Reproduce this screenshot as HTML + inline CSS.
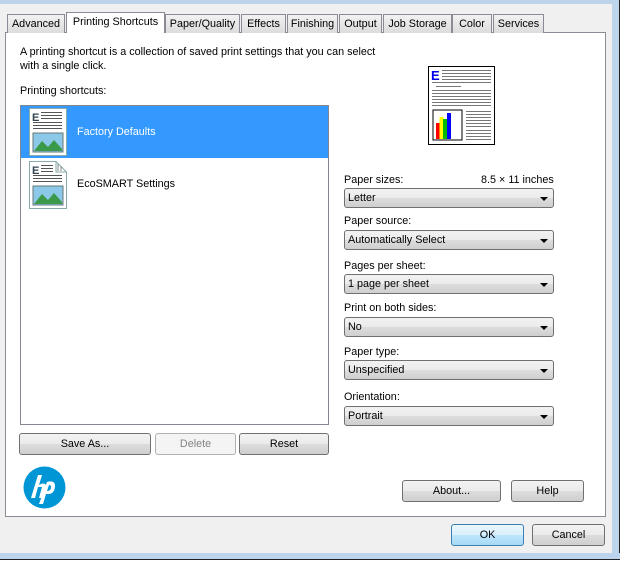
<!DOCTYPE html>
<html><head><meta charset="utf-8"><style>
*{box-sizing:border-box;margin:0;padding:0}
body{width:624px;height:563px;position:relative;overflow:hidden;background:#f0f0f0;font-family:"Liberation Sans",sans-serif;font-size:10.8px;color:#000}
.a{position:absolute}
.tab{position:absolute;top:14px;height:19px;border:1px solid #898c95;border-bottom:none;background:linear-gradient(#f2f2f2,#dcdcdc);text-align:center;line-height:19px;white-space:nowrap}
.btn{position:absolute;border:1px solid #707070;border-radius:3px;background:linear-gradient(#f2f2f2 0,#ebebeb 50%,#dddddd 51%,#cfcfcf 100%);text-align:center;line-height:21px}
.sel{position:absolute;left:344px;width:210px;height:20px;border:1px solid #707070;border-radius:3px;background:linear-gradient(#f2f2f2 0,#ebebeb 50%,#dddddd 51%,#cfcfcf 100%);padding-left:3px;line-height:19px}
.sel:after{content:"";position:absolute;right:5px;top:8px;border-left:4px solid transparent;border-right:4px solid transparent;border-top:4px solid #000}
.lbl{position:absolute;left:344px}
</style></head><body>
<div class="a" style="left:0;top:0;width:612px;height:4px;background:#bcd3ea"></div>
<div class="a" style="left:612px;top:0;width:8px;height:558px;background:#bcd4ec"></div>
<div class="a" style="left:619px;top:0;width:1px;height:563px;background:#222"></div>
<div class="a" style="left:620px;top:0;width:4px;height:563px;background:#fff"></div>
<div class="a" style="left:0;top:553px;width:620px;height:6px;background:#bcd4ec"></div>
<div class="a" style="left:0;top:559px;width:620px;height:1px;background:#222"></div>
<div class="a" style="left:0;top:560px;width:620px;height:3px;background:#fff"></div>

<div class="a" style="left:5px;top:32px;width:601px;height:485px;background:#fff;border:1px solid #898c95"></div>
<div class="tab" style="left:7px;width:58px">Advanced</div>
<div class="tab" style="left:66px;top:12px;height:21px;width:99px;background:#fff;z-index:2;line-height:19px">Printing Shortcuts</div>
<div class="tab" style="left:165px;width:75px">Paper/Quality</div>
<div class="tab" style="left:241px;width:45px">Effects</div>
<div class="tab" style="left:287px;width:51px">Finishing</div>
<div class="tab" style="left:339px;width:43px">Output</div>
<div class="tab" style="left:383px;width:69px">Job Storage</div>
<div class="tab" style="left:452px;width:40px">Color</div>
<div class="tab" style="left:493px;width:51px">Services</div>

<div class="a" style="left:20px;top:45px;line-height:14px">A printing shortcut is a collection of saved print settings that you can select<br>with a single click.</div>
<div class="a" style="left:20px;top:85px">Printing shortcuts:</div>

<div class="a" style="left:20px;top:105px;width:309px;height:320px;border:1px solid #828790;background:#fff"></div>
<div class="a" style="left:21px;top:106px;width:307px;height:52px;background:#3399ff"></div>
<svg class="a" style="left:28px;top:107px" width="40" height="50">
<rect x="1.5" y="1.5" width="37" height="47" fill="#fff" stroke="#8aa" />
<text x="4" y="14" font-family="Liberation Sans" font-weight="bold" font-size="11" fill="#345">E</text>
<g stroke="#555" stroke-width="1"><line x1="13" y1="5.5" x2="34" y2="5.5"/><line x1="13" y1="8.5" x2="34" y2="8.5"/><line x1="13" y1="11.5" x2="34" y2="11.5"/><line x1="5" y1="15.5" x2="34" y2="15.5"/><line x1="5" y1="18.5" x2="34" y2="18.5"/><line x1="5" y1="21.5" x2="34" y2="21.5"/></g>
<rect x="5" y="26" width="30" height="19" fill="#8cc8e8" stroke="#677"/>
<path d="M6 44 L14 34 L20 40 L26 33 L34 42 L34 44 Z" fill="#3a9a4a"/>
</svg>
<div class="a" style="left:77px;top:126px;color:#fff">Factory Defaults</div>
<svg class="a" style="left:28px;top:160px" width="40" height="50">
<path d="M1.5 1.5 H28 L38.5 12 V48.5 H1.5 Z" fill="#fff" stroke="#8aa"/>
<path d="M28 1.5 V12 H38.5" fill="none" stroke="#8aa"/>
<g stroke="#888"><line x1="30" y1="4" x2="30" y2="11"/><line x1="33" y1="6" x2="33" y2="11"/></g>
<text x="4" y="14" font-family="Liberation Sans" font-weight="bold" font-size="11" fill="#345">E</text>
<g stroke="#555" stroke-width="1"><line x1="13" y1="5.5" x2="25" y2="5.5"/><line x1="13" y1="8.5" x2="25" y2="8.5"/><line x1="13" y1="11.5" x2="25" y2="11.5"/><line x1="5" y1="15.5" x2="34" y2="15.5"/><line x1="5" y1="18.5" x2="34" y2="18.5"/><line x1="5" y1="21.5" x2="34" y2="21.5"/></g>
<rect x="5" y="26" width="30" height="19" fill="#8cc8e8" stroke="#677"/>
<path d="M6 44 L14 34 L20 40 L26 33 L34 42 L34 44 Z" fill="#3a9a4a"/>
</svg>
<div class="a" style="left:77px;top:178px">EcoSMART Settings</div>

<div class="btn" style="left:19px;top:433px;width:132px;height:22px">Save As...</div>
<div class="btn" style="left:155px;top:433px;width:81px;height:22px;background:#f4f4f4;border-color:#adb2b5;color:#838383">Delete</div>
<div class="btn" style="left:239px;top:433px;width:90px;height:22px">Reset</div>

<svg class="a" style="left:23px;top:466px" width="43" height="43" viewBox="0 0 43 43">
<circle cx="21.5" cy="21.5" r="21" fill="#0096d6"/>
<path d="M15 9 L19 9 L16 19 Q21 16 23 19 L20 32 L16 32 L19 21 L15 21 L12 32 L8 32 Z M24 16 Q31 14 32 19 Q32 28 25 28 L23 28 L20 38 L16 38 Z M26 19 L24 25 Q28 25 28 21 Q28 19 26 19 Z" fill="#fff"/>
</svg>

<div class="btn" style="left:402px;top:480px;width:99px;height:22px">About...</div>
<div class="btn" style="left:511px;top:480px;width:73px;height:22px">Help</div>

<div class="btn" style="left:451px;top:524px;width:73px;height:22px;border-color:#3c7fb1;background:linear-gradient(#eaf6fd 0,#d9f0fc 50%,#bee6fd 51%,#a7d9f5 100%)">OK</div>
<div class="btn" style="left:532px;top:524px;width:73px;height:22px">Cancel</div>

<svg class="a" style="left:428px;top:66px" width="67" height="79">
<rect x="0.5" y="0.5" width="66" height="78" fill="#fff" stroke="#000"/>
<text x="3" y="14" font-family="Liberation Sans" font-weight="bold" font-size="13" fill="#0000ee">E</text>
<g stroke="#777"><line x1="14" y1="4.5" x2="63" y2="4.5"/><line x1="14" y1="7.5" x2="63" y2="7.5"/><line x1="14" y1="10.5" x2="63" y2="10.5"/><line x1="14" y1="13.5" x2="63" y2="13.5"/><line x1="4" y1="16.5" x2="63" y2="16.5"/><line x1="8" y1="20.5" x2="33" y2="20.5"/><line x1="4" y1="24.5" x2="63" y2="24.5"/><line x1="4" y1="27.5" x2="63" y2="27.5"/><line x1="4" y1="30.5" x2="63" y2="30.5"/><line x1="4" y1="33.5" x2="63" y2="33.5"/><line x1="4" y1="36.5" x2="63" y2="36.5"/><line x1="4" y1="39.5" x2="63" y2="39.5"/>
<line x1="38" y1="45.5" x2="63" y2="45.5"/><line x1="38" y1="48.5" x2="63" y2="48.5"/><line x1="38" y1="51.5" x2="63" y2="51.5"/><line x1="38" y1="54.5" x2="63" y2="54.5"/><line x1="38" y1="57.5" x2="63" y2="57.5"/><line x1="38" y1="60.5" x2="63" y2="60.5"/><line x1="38" y1="64.5" x2="63" y2="64.5"/><line x1="38" y1="67.5" x2="63" y2="67.5"/><line x1="38" y1="70.5" x2="63" y2="70.5"/><line x1="38" y1="73.5" x2="63" y2="73.5"/></g>
<rect x="5" y="44" width="29" height="30" fill="#fff" stroke="#000"/>
<rect x="8" y="57" width="4" height="16" fill="#f00"/><rect x="11.5" y="51" width="4" height="22" fill="#ff0"/><rect x="15" y="53" width="4" height="20" fill="#0b0"/><rect x="19" y="47" width="4" height="26" fill="#00f"/>
</svg>

<div class="lbl" style="top:174px">Paper sizes:</div>
<div class="a" style="left:481px;top:174px">8.5 × 11 inches</div>
<div class="sel" style="top:188px">Letter</div>
<div class="lbl" style="top:215px">Paper source:</div>
<div class="sel" style="top:230px">Automatically Select</div>
<div class="lbl" style="top:260px">Pages per sheet:</div>
<div class="sel" style="top:274px">1 page per sheet</div>
<div class="lbl" style="top:302px">Print on both sides:</div>
<div class="sel" style="top:317px">No</div>
<div class="lbl" style="top:346px">Paper type:</div>
<div class="sel" style="top:360px">Unspecified</div>
<div class="lbl" style="top:391px">Orientation:</div>
<div class="sel" style="top:406px">Portrait</div>
</body></html>
